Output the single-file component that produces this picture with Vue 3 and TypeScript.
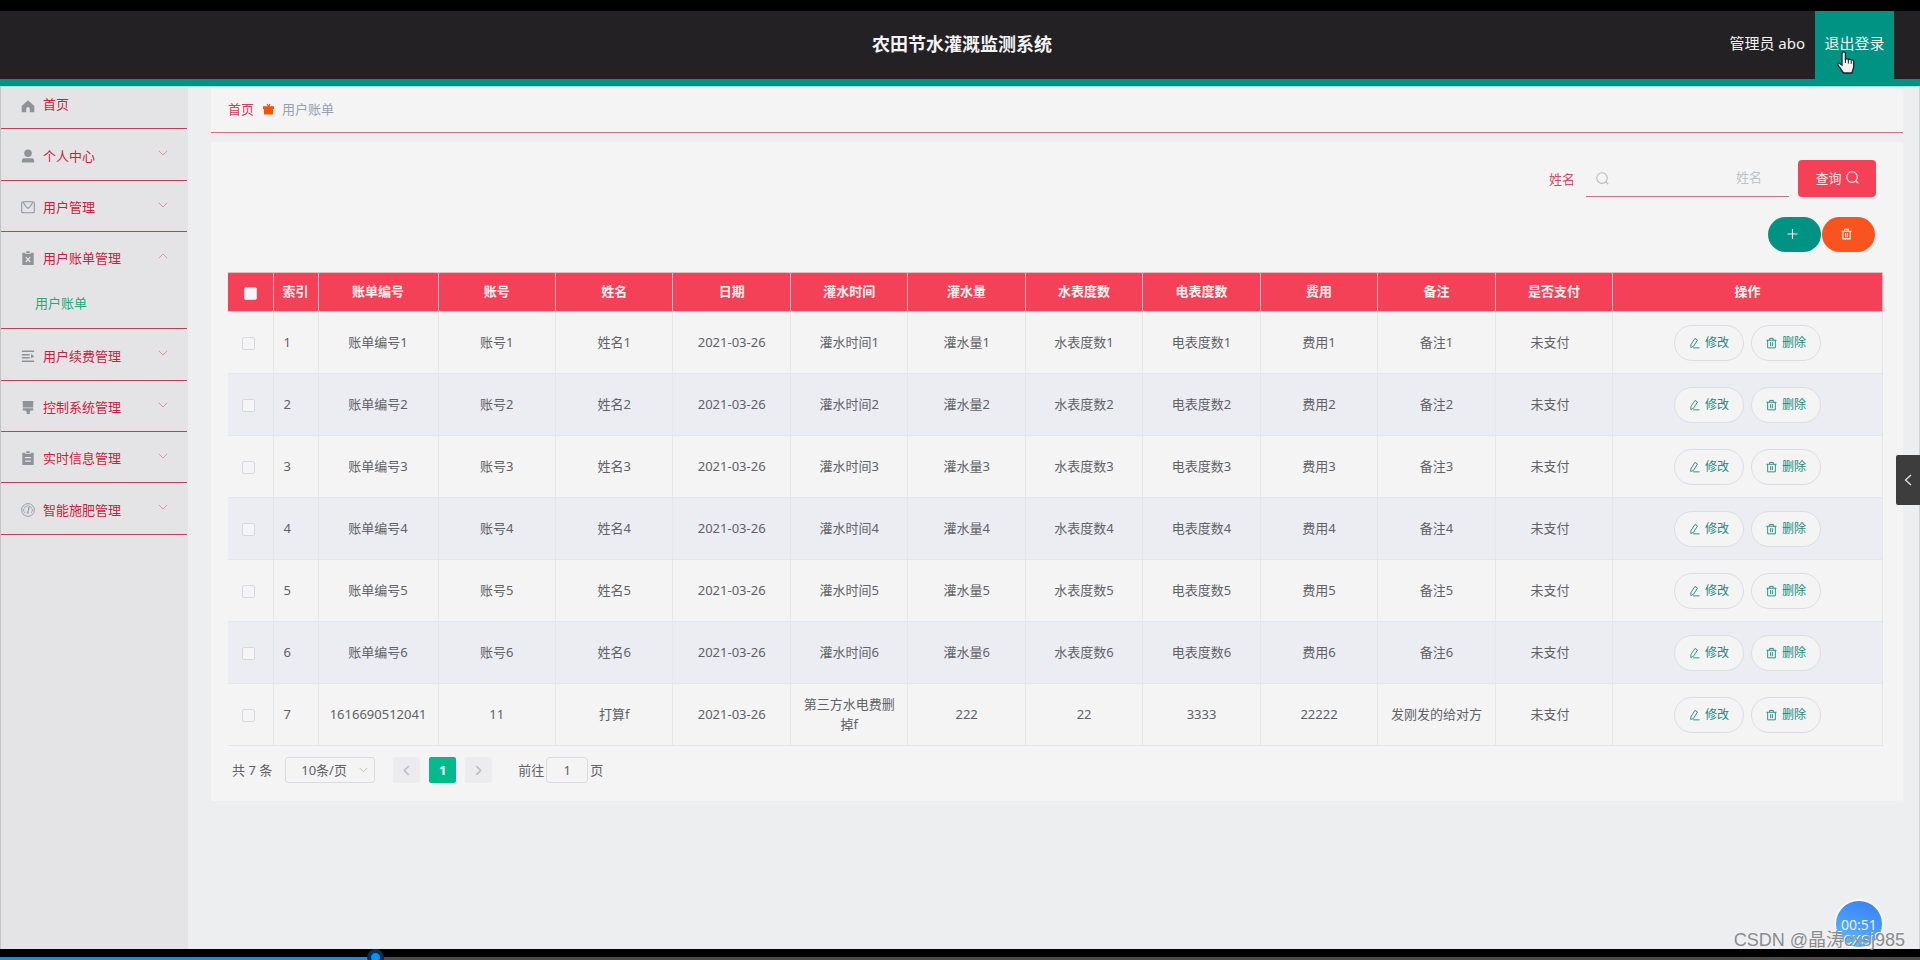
<script setup lang="ts">
import { ref } from 'vue'

interface MenuItem {
  label: string
  icon: string
  children?: string[]
}

interface Bill {
  id: number
  code: string
  account: string
  name: string
  date: string
  time: string
  amount: string
  water: string
  power: string
  fee: string
  remark: string
  paid: string
}

const menu: MenuItem[] = [
  { label: '首页', icon: 'home' },
  { label: '个人中心', icon: 'user', children: [] },
  { label: '用户管理', icon: 'mail', children: [] },
  { label: '用户账单管理', icon: 'bill', children: ['用户账单'] },
  { label: '用户续费管理', icon: 'list', children: [] },
  { label: '控制系统管理', icon: 'brush', children: [] },
  { label: '实时信息管理', icon: 'clip', children: [] },
  { label: '智能施肥管理', icon: 'gauge', children: [] },
]

const columns = ['账单编号', '账号', '姓名', '日期', '灌水时间', '灌水量', '水表度数', '电表度数', '费用', '备注', '是否支付']

const bills: Bill[] = [1, 2, 3, 4, 5, 6].map((n) => ({
  id: n,
  code: `账单编号${n}`,
  account: `账号${n}`,
  name: `姓名${n}`,
  date: '2021-03-26',
  time: `灌水时间${n}`,
  amount: `灌水量${n}`,
  water: `水表度数${n}`,
  power: `电表度数${n}`,
  fee: `费用${n}`,
  remark: `备注${n}`,
  paid: '未支付',
}))
bills.push({
  id: 7,
  code: '1616690512041',
  account: '11',
  name: '打算f',
  date: '2021-03-26',
  time: '第三方水电费删掉f',
  amount: '222',
  water: '22',
  power: '3333',
  fee: '22222',
  remark: '发刚发的给对方',
  paid: '未支付',
})

const keyword = ref('')
const page = ref('1')
const played = ref(19.6)
</script>

<template>
  <div class="screen">
    <header class="topbar">
      <h1 class="title">农田节水灌溉监测系统</h1>
      <span class="user">管理员 abo</span>
      <button class="logout" type="button">
        退出登录
        <svg class="pointer" viewBox="0 0 18 23" aria-hidden="true">
          <path d="M5 14V2.600a1.700 1.700 0 0 1 3.400 0V9c0-2 3-1.800 3 .2 0-1.600 2.800-1.400 2.800.6 0-1.500 2.500-1.300 2.500.7v5.500L15 22H6.500L1.200 14.500c-1-1.800.8-3 2.200-1.600z" fill="#f2f2f2" stroke="#15252b" stroke-width="1.300" />
          <path d="M8.400 8v4M11.400 9v3.500M14.200 10v3" stroke="#15252b" stroke-width="1" fill="none" />
        </svg>
      </button>
    </header>

    <div class="body">
      <nav class="sidebar" aria-label="菜单">
        <ul class="menu">
          <li v-for="item in menu" :key="item.label" class="entry">
            <a class="entry-link" href="#">
              <svg class="entry-icon" viewBox="0 0 16 16" aria-hidden="true">
                <path v-if="item.icon === 'home'" d="M8 1.500.8 8v7H6v-4a2 2 0 0 1 4 0v4h5.200V8z" fill="currentColor" />
                <g v-else-if="item.icon === 'user'" fill="currentColor">
                  <circle cx="8" cy="4.800" r="4.300" />
                  <path d="M1 15.500V13a2.500 2.500 0 0 1 2.500-2.500h9A2.500 2.500 0 0 1 15 13v2.500z" />
                </g>
                <g v-else-if="item.icon === 'mail'" fill="none" stroke="currentColor" stroke-width="1.200">
                  <rect x=".8" y="2" width="14.400" height="12.500" rx="1.500" />
                  <path d="m2.500 3 4 5.500q1.500 1.500 3 0l4-5.500" />
                </g>
                <g v-else-if="item.icon === 'bill'">
                  <path d="M1.500 2H5v1.500h6V2h3.500v14h-13zM6 .3h4v2.200H6z" fill="currentColor" />
                  <path d="m5.500 7 5 5.500m0-5.500-5 5.500" stroke="#e4e4e6" stroke-width="1.500" />
                </g>
                <g v-else-if="item.icon === 'list'" stroke="currentColor" stroke-width="1.600" fill="none">
                  <path d="M1 2.500h14M1 6.500h9M1 10h9M1 14h14" />
                  <path d="m11.500 5.500 3.500 2.700-3.500 2.700z" fill="currentColor" stroke="none" />
                </g>
                <path v-else-if="item.icon === 'brush'" d="M2 1h12v7.500H2zm0 8.500h12V12h-3.500v1H10v3H6.500v-3H5.500v-1H2z" fill="currentColor" />
                <g v-else-if="item.icon === 'clip'">
                  <path d="M1.500 2H5v1.500h6V2h3.500v14h-13zM6 .3h4v2.200H6z" fill="currentColor" />
                  <path d="M4.500 7.500h7m-7 4h7" stroke="#e4e4e6" stroke-width="1.300" />
                </g>
                <g v-else fill="none" stroke="currentColor">
                  <circle cx="8" cy="8" r="7.300" />
                  <path d="M4.200 11.500a5 5 0 1 1 7.600 0" stroke-width=".8" />
                  <path d="M9.200 4.500 8 10" stroke-width="1.300" />
                  <circle cx="7.700" cy="11" r=".8" />
                </g>
              </svg>
              <span>{{ item.label }}</span>
              <svg v-if="item.children" class="arrow" viewBox="0 0 10 6" aria-hidden="true">
                <path :d="item.children.length ? 'M.8 5.200 5 1l4.200 4.200' : 'M.8.8 5 5 9.200.8'" fill="none" stroke="currentColor" />
              </svg>
            </a>
            <a v-for="child in item.children" :key="child" class="child" href="#">{{ child }}</a>
          </li>
        </ul>
      </nav>

      <main class="main">
        <div class="crumbs">
          <a class="crumb-home" href="#">首页</a>
          <svg class="crumb-icon" viewBox="0 0 12 12" aria-hidden="true">
            <path d="M1 5.500h10V12H1zM0 3h12v3H0zM5 3 4 .8l1-.6 1 1.600 1-1.600 1 .6L7 3z" fill="#f4510b" />
          </svg>
          <span>用户账单</span>
        </div>

        <section class="card">
          <form class="search" @submit.prevent>
            <label for="name">姓名</label>
            <div class="field">
              <svg class="lens" viewBox="0 0 14 14" aria-hidden="true">
                <circle cx="6.500" cy="6.500" r="5.700" fill="none" stroke="currentColor" stroke-width="1.200" />
                <path d="m10.500 10.500 2.700 2.700" stroke="currentColor" stroke-width="1.200" />
              </svg>
              <input id="name" v-model="keyword" type="text" placeholder="姓名">
            </div>
            <button class="query" type="submit">
              查询
              <svg class="lens" viewBox="0 0 14 14" aria-hidden="true">
                <circle cx="6.500" cy="6.500" r="5.700" fill="none" stroke="currentColor" stroke-width="1.200" />
                <path d="m10.500 10.500 2.700 2.700" stroke="currentColor" stroke-width="1.200" />
              </svg>
            </button>
          </form>

          <div class="tools">
            <button class="pill add" type="button" aria-label="新增">
              <svg class="tool-icon" viewBox="0 0 12 12" aria-hidden="true"><path d="M6 .5v11M.5 6h11" stroke="currentColor" stroke-width="1.200" /></svg>
            </button>
            <button class="pill remove" type="button" aria-label="删除">
              <svg class="tool-icon" viewBox="0 0 12 12" aria-hidden="true"><path d="M.5 3h11M4 3V1h4v2M2 3v8.300h8V3M5 5v4.500M7 5v4.500" fill="none" stroke="currentColor" stroke-width="1.200" /></svg>
            </button>
          </div>

          <table class="table">
            <colgroup>
              <col class="c-small"><col class="c-small"><col class="c-code">
              <col v-for="n in 10" :key="n" class="c-data">
              <col>
            </colgroup>
            <thead>
              <tr>
                <th><input type="checkbox" aria-label="全选"></th>
                <th class="left">索引</th>
                <th v-for="c in columns" :key="c">{{ c }}</th>
                <th>操作</th>
              </tr>
            </thead>
            <tbody>
              <tr v-for="b in bills" :key="b.id">
                <td class="pick"><input type="checkbox" :aria-label="`选择第${b.id}行`"></td>
                <td class="left">{{ b.id }}</td>
                <td>{{ b.code }}</td>
                <td>{{ b.account }}</td>
                <td>{{ b.name }}</td>
                <td>{{ b.date }}</td>
                <td>{{ b.time }}</td>
                <td>{{ b.amount }}</td>
                <td>{{ b.water }}</td>
                <td>{{ b.power }}</td>
                <td>{{ b.fee }}</td>
                <td>{{ b.remark }}</td>
                <td class="paid">{{ b.paid }}</td>
                <td class="ops">
                  <div class="actions">
                    <button class="action" type="button">
                      <svg class="action-icon" viewBox="0 0 12 12" aria-hidden="true"><path d="M2 8 6.500 1l2.800 1.700L5 9.500 2 11zM4.500 11.300H11.500" fill="none" stroke="currentColor" /></svg>
                      修改
                    </button>
                    <button class="action" type="button">
                      <svg class="action-icon" viewBox="0 0 12 12" aria-hidden="true"><path d="M.5 3h11M4 3V1h4v2M1.800 3v8.300h8.400V3M5 5v4.500M7 5v4.500" fill="none" stroke="currentColor" /></svg>
                      删除
                    </button>
                  </div>
                </td>
              </tr>
            </tbody>
          </table>

          <div class="pager">
            <span class="total">共 7 条</span>
            <div class="size">
              <select aria-label="每页条数"><option>10条/页</option></select>
              <svg class="size-arrow" viewBox="0 0 10 6" aria-hidden="true"><path d="M.8.8 5 5 9.200.8" fill="none" stroke="currentColor" /></svg>
            </div>
            <button class="page" type="button" aria-label="上一页">
              <svg class="page-icon" viewBox="0 0 8 12" aria-hidden="true"><path d="M6.500 1 1.500 6l5 5" fill="none" stroke="currentColor" stroke-width="1.800" /></svg>
            </button>
            <button class="page current" type="button">1</button>
            <button class="page" type="button" aria-label="下一页">
              <svg class="page-icon" viewBox="0 0 8 12" aria-hidden="true"><path d="m1.500 1 5 5-5 5" fill="none" stroke="currentColor" stroke-width="1.800" /></svg>
            </button>
            <label class="jump">前往 <input v-model="page" type="text"> 页</label>
          </div>
        </section>
      </main>
    </div>

    <footer class="player">
      <div class="played" :style="{ width: played + '%' }"><span class="knob"></span></div>
    </footer>

    <button class="drawer" type="button" aria-label="展开">
      <svg class="drawer-icon" viewBox="0 0 8 12" aria-hidden="true"><path d="M7 1 1.500 6 7 11" fill="none" stroke="currentColor" stroke-width="1.200" /></svg>
    </button>
    <div class="timer">00:51</div>
    <div class="watermark">CSDN @晶涛cxsj985</div>
  </div>
</template>

<style>
body {
  margin: 0;
}
</style>

<style scoped>
.screen {
  position: relative;
  display: flex;
  flex-direction: column;
  box-sizing: border-box;
  min-height: 100vh;
  overflow: hidden;
  border-top: 11px solid #000;
  background: #edeef0;
  color: #606266;
  font: 13px/20px "Noto Sans", "Noto Sans CJK SC", sans-serif;
}

button,
input,
select {
  box-sizing: border-box;
  margin: 0;
  font: inherit;
}

button {
  display: flex;
  align-items: center;
  justify-content: center;
  padding: 0;
  border: 0;
}

a {
  text-decoration: none;
}

.topbar {
  position: relative;
  display: flex;
  justify-content: flex-end;
  height: 68px;
  padding-right: 26px;
  border-bottom: 7px solid #009283;
  background: #232124;
  color: #f3f3f3;
}

.title {
  position: absolute;
  inset: 0;
  margin: 0;
  padding-left: 4px;
  text-align: center;
  font-size: 18px;
  line-height: 66px;
}

.user {
  padding-right: 10px;
  font-size: 15px;
  line-height: 64px;
}

.logout {
  position: relative;
  width: 79px;
  padding-bottom: 4px;
  background: #009283;
  color: #f3f3f3;
  font-size: 15px;
}

.pointer {
  position: absolute;
  left: 22px;
  top: 40px;
  width: 18px;
  height: 23px;
}

.body {
  display: flex;
  flex: 1;
  border-top: 1px solid #a9dfda;
  border-right: 1px solid #d2d3d5;
}

.sidebar {
  width: 187px;
  border-left: 1px solid #c4c4c6;
  background: #e4e4e6;
}

.menu {
  margin: 0;
  padding: 0 1px 0 0;
  list-style: none;
}

.entry {
  border-bottom: 1px solid #c33f55;
}

.entry-link {
  display: flex;
  align-items: center;
  box-sizing: border-box;
  height: 50px;
  padding: 2px 19px 0 20px;
  color: #c91c40;
}

.entry:nth-child(3n + 2) .entry-link {
  height: 51px;
}

.entry:first-child .entry-link {
  height: 41px;
  padding-top: 0;
  padding-bottom: 8px;
}

.entry-icon {
  width: 14px;
  height: 14px;
  margin-right: 8px;
  color: #8f9299;
}

.entry:first-child .entry-icon {
  margin-top: 4px;
}

.arrow {
  width: 10px;
  height: 6px;
  margin-left: auto;
  margin-bottom: 5px;
  color: #e5939f;
}

.child {
  display: block;
  padding: 11px 34px 15px;
  color: #25a878;
}

.main {
  flex: 1;
  min-width: 0;
  padding: 0 16px 0 23px;
}

.crumbs {
  display: flex;
  align-items: center;
  box-sizing: border-box;
  height: 46px;
  padding: 0 17px 2px;
  border-bottom: 1px solid #d4707f;
  background: #f4f4f4;
  color: #97a0b3;
}

.crumb-home {
  color: #d23a57;
}

.crumb-icon {
  width: 11px;
  height: 12px;
  margin: 0 8px 0 9px;
}

.card {
  margin-top: 9px;
  padding: 18px 20px 18px 17px;
  background: #f4f4f4;
}

.search {
  display: flex;
  align-items: center;
  justify-content: flex-end;
  padding-right: 7px;
  color: #d64a63;
}

.field {
  display: flex;
  align-items: center;
  width: 203px;
  height: 36px;
  margin: 0 9px 0 11px;
  box-sizing: border-box;
  border-bottom: 1px solid #cf6f8a;
}

.field .lens {
  margin-left: 10px;
  color: #b9bcc4;
}

.field input {
  flex: 1;
  min-width: 0;
  height: 34px;
  padding: 0 27px 2px 0;
  border: 0;
  outline: 0;
  background: transparent;
  text-align: right;
}

.field input::placeholder {
  color: #bfc2ca;
  opacity: 1;
}

.lens {
  width: 13px;
  height: 13px;
}

.query {
  gap: 4px;
  width: 78px;
  height: 37px;
  padding-bottom: 2px;
  border-radius: 4px;
  background: #f54157;
  color: #fbe6e9;
}

.tools {
  display: flex;
  justify-content: flex-end;
  gap: 1px;
  margin: 20px 8px 20px 0;
}

.pill {
  width: 53px;
  height: 35px;
  padding: 0 4px 2px 0;
  border-radius: 18px;
  color: #f4f4f4;
}

.add {
  background: #009283;
}

.remove {
  background: #f9541f;
}

.tool-icon {
  width: 11px;
  height: 12px;
}

.table {
  width: 100%;
  table-layout: fixed;
  border-collapse: collapse;
}

.c-small {
  width: 45px;
}

.c-code {
  width: 120px;
}

.c-data {
  width: 7.1%;
}

th,
td {
  box-sizing: border-box;
  padding: 0 10px 2px;
  border: 1px solid #e4e6ee;
  text-align: center;
}

td:first-child,
th:first-child {
  border-left: 0;
}

th {
  height: 39px;
  padding: 0 9px 2px;
  border-color: #e9bac3;
  background: #f54157;
  color: #fdf0f1;
  font-weight: 700;
}

td {
  height: 62px;
}

tbody tr:nth-child(even) {
  background: #ecedf2;
}

th.left,
td.left {
  text-align: left;
}

td.paid {
  padding-right: 18px;
}

td.pick {
  padding-right: 14px;
}

td.ops {
  padding-bottom: 0;
}

.table input {
  appearance: none;
  display: block;
  width: 13px;
  height: 13px;
  margin: 4px auto 0;
  border: 1px solid #d6d8de;
  border-radius: 2px;
  background: #f5f5f5;
}

.actions {
  display: flex;
  justify-content: center;
  gap: 7px;
}

.action {
  gap: 5px;
  width: 70px;
  height: 36px;
  border: 1px solid #dcdde4;
  border-radius: 18px;
  background: #f4f4f4;
  color: #23897c;
  font-size: 12px;
}

.action-icon {
  width: 11px;
  height: 12px;
}

.pager {
  display: flex;
  align-items: center;
  padding: 11px 4px 0;
}

.size {
  position: relative;
  width: 90px;
  margin: 0 18px 0 13px;
}

.size select {
  appearance: none;
  display: block;
  width: 100%;
  height: 26px;
  padding: 0 15px;
  border: 1px solid #d9dbe1;
  border-radius: 3px;
  background: #f4f4f4;
  color: #606266;
}

.size-arrow {
  position: absolute;
  right: 7px;
  top: 10px;
  width: 9px;
  height: 6px;
  color: #b9bcc4;
}

.page {
  width: 27px;
  height: 26px;
  margin-right: 9px;
  border-radius: 2px;
  background: #ececee;
  color: #b9bcc4;
}

.current {
  background: #04ba8c;
  color: #fff;
  font-weight: 700;
}

.page-icon {
  width: 7px;
  height: 11px;
}

.jump {
  display: flex;
  align-items: center;
  gap: 2px;
  margin-left: 17px;
}

.jump input {
  width: 42px;
  height: 26px;
  border: 1px solid #d9dbe1;
  border-radius: 4px;
  background: #f4f4f4;
  color: #606266;
  text-align: center;
}

.player {
  height: 3px;
  border-top: 8px solid #000;
  background: #4d4a4c;
}

.played {
  position: relative;
  height: 3px;
  background: #0593fb;
}

.knob {
  position: absolute;
  right: -8px;
  top: -8px;
  box-sizing: border-box;
  width: 17px;
  height: 17px;
  border: 4px solid #05304f;
  border-radius: 50%;
  background: #0593fb;
}

.drawer {
  position: absolute;
  right: 0;
  top: 444px;
  width: 24px;
  height: 50px;
  border-radius: 2px 0 0 2px;
  background: #3d3d3d;
  color: #e8e8e8;
}

.drawer-icon {
  width: 8px;
  height: 12px;
}

.timer {
  position: absolute;
  right: 36px;
  bottom: 11px;
  box-sizing: border-box;
  width: 50px;
  height: 50px;
  border: 2px solid #f5f7fb;
  border-radius: 50%;
  background: linear-gradient(20deg, #5ac3f8, #4a9bf8 50%, #347ef4);
  color: #e9f2fd;
  font-size: 14px;
  line-height: 48px;
  text-align: center;
}

.watermark {
  position: absolute;
  right: 15px;
  bottom: 8px;
  color: #8b8b8d;
  font-family: "Liberation Sans", "Noto Sans CJK SC", sans-serif;
  font-size: 18px;
  line-height: 24px;
  text-shadow: -1px -1px 0 #f4f4f4;
}
</style>
